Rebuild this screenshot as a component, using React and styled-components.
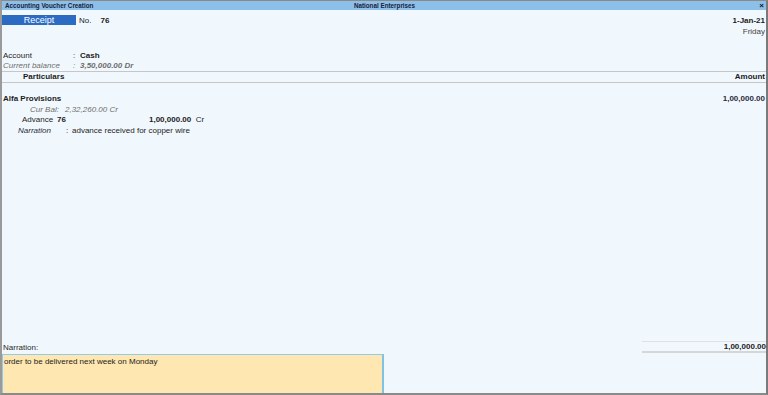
import React from "react";
import styled, { createGlobalStyle } from "styled-components";

const Global = createGlobalStyle`
  html, body { margin: 0; padding: 0; background: #f1f8fd; }
  body { font-family: "Liberation Sans", Arial, sans-serif; }
  * { box-sizing: border-box; }
`;

const Frame = styled.div`
  width: 768px;
  height: 395px;
  display: flex;
  flex-direction: column;
  background: #f1f8fd;
  border-top: 1px solid #8a8a8a;
  border-bottom: 2px solid #8a8a8a;
  border-left: 2px solid #9a9a9a;
  border-right: 2px solid #7a7a7a;
  font-size: 8px;
  color: #1c1c1c;
  overflow: hidden;
`;

const TitleBar = styled.div`
  height: 9px;
  flex: none;
  background: #8dc0e9;
  display: grid;
  grid-template-columns: 1fr auto 1fr;
  align-items: center;
  padding: 0 2px 0 3px;
  font-size: 6.3px;
  font-weight: bold;
  color: #17213d;
  line-height: 9px;
`;

const TitleRight = styled.span`
  justify-self: end;
  font-size: 8px;
  color: #111;
`;

const Head = styled.div`
  display: flex;
  justify-content: space-between;
  padding: 5px 1px 0 0;
  flex: none;
`;

const VoucherType = styled.div`
  display: flex;
  align-items: center;
  height: 10px;
`;

const TypeBox = styled.div`
  width: 74px;
  height: 10px;
  background: #2b6bc2;
  color: #fff;
  font-size: 9px;
  line-height: 10px;
  text-align: center;
`;

const Label = styled.span`
  margin-left: ${(p) => p.$ml || 0}px;
  font-weight: ${(p) => (p.$bold ? "bold" : "normal")};
  color: #1c1c1c;
`;

const DateCol = styled.div`
  display: flex;
  flex-direction: column;
  align-items: flex-end;
  line-height: 11px;
`;

const DateText = styled.span`
  font-weight: ${(p) => (p.$bold ? "bold" : "normal")};
  color: ${(p) => (p.$bold ? "#1c1c1c" : "#444")};
`;

const AccountBlock = styled.div`
  margin-top: 14px;
  padding-left: 1px;
  flex: none;
`;

const InfoRow = styled.div`
  display: grid;
  grid-template-columns: 70px 7px auto;
  height: 10px;
  line-height: 10px;
  color: ${(p) => (p.$muted ? "#6e6e6e" : "#1c1c1c")};
  font-style: ${(p) => (p.$muted ? "italic" : "normal")};
`;

const Value = styled.span`
  font-weight: bold;
`;

const TableHead = styled.div`
  flex: none;
  display: flex;
  justify-content: space-between;
  border-top: 1px solid #c6c6c6;
  border-bottom: 1px solid #c6c6c6;
  height: 12px;
  line-height: 10px;
  font-weight: bold;
  padding: 0 1px 0 21px;
`;

const Body = styled.div`
  flex: 1;
  padding-top: 11px;
`;

const Line = styled.div`
  display: flex;
  align-items: baseline;
  height: 10.7px;
  line-height: 10.7px;
  padding-left: ${(p) => p.$indent || 0}px;
  padding-right: 1px;
  font-style: ${(p) => (p.$italic ? "italic" : "normal")};
  color: ${(p) => (p.$muted ? "#6e6e6e" : "#1c1c1c")};
`;

const Cell = styled.span`
  width: ${(p) => (p.$w ? `${p.$w}px` : "auto")};
  flex: ${(p) => (p.$grow ? 1 : "none")};
  font-weight: ${(p) => (p.$bold ? "bold" : "normal")};
  font-style: ${(p) => (p.$italic ? "italic" : "inherit")};
  color: ${(p) => (p.$dark ? "#2a2a3a" : "inherit")};
`;

const Footer = styled.div`
  flex: none;
  height: 13px;
  display: flex;
  justify-content: space-between;
  align-items: flex-start;
`;

const FooterLabel = styled.span`
  line-height: 13px;
  padding-left: 1px;
  color: #2a2a2a;
`;

const TotalBox = styled.div`
  width: 124px;
  height: 12px;
  border-top: 1px solid #e0e0e0;
  border-bottom: 2px solid #d6d6d6;
  text-align: right;
  font-weight: bold;
  line-height: 9px;
`;

const NarrationBox = styled.div`
  flex: none;
  width: 382px;
  height: 39px;
  background: #fee7b1;
  border: 1px solid #92cbe8;
  border-right: 2px solid #80c2e3;
  border-bottom: none;
  padding: 2px 1px;
  line-height: 9px;
  color: #1c1c1c;
`;

export default function App() {
  return (
    <>
      <Global />
      <Frame>
        <TitleBar>
          <span>Accounting Voucher Creation</span>
          <span>National Enterprises</span>
          <TitleRight>×</TitleRight>
        </TitleBar>
        <Head>
          <VoucherType>
            <TypeBox>Receipt</TypeBox>
            <Label $ml={3}>No.</Label>
            <Label $ml={9} $bold>76</Label>
          </VoucherType>
          <DateCol>
            <DateText $bold>1-Jan-21</DateText>
            <DateText>Friday</DateText>
          </DateCol>
        </Head>
        <AccountBlock>
          <InfoRow>
            <span>Account</span>
            <span>:</span>
            <Value>Cash</Value>
          </InfoRow>
          <InfoRow $muted>
            <span>Current balance</span>
            <span>:</span>
            <Value>3,50,000.00 Dr</Value>
          </InfoRow>
        </AccountBlock>
        <TableHead>
          <span>Particulars</span>
          <span>Amount</span>
        </TableHead>
        <Body>
          <Line $indent={1}>
            <Cell $grow $bold>Alfa Provisions</Cell>
            <Cell $bold $dark>1,00,000.00</Cell>
          </Line>
          <Line $indent={28} $italic $muted>
            <Cell $w={35}>Cur Bal:</Cell>
            <Cell>2,32,260.00 Cr</Cell>
          </Line>
          <Line $indent={20}>
            <Cell $w={35}>Advance</Cell>
            <Cell $w={92} $bold>76</Cell>
            <Cell $bold>1,00,000.00</Cell>
            <Cell>&nbsp; Cr</Cell>
          </Line>
          <Line $indent={16}>
            <Cell $w={48} $italic $dark>Narration</Cell>
            <Cell $w={6}>:</Cell>
            <Cell>advance received for copper wire</Cell>
          </Line>
        </Body>
        <Footer>
          <FooterLabel>Narration:</FooterLabel>
          <TotalBox>1,00,000.00</TotalBox>
        </Footer>
        <NarrationBox>order to be delivered next week on Monday</NarrationBox>
      </Frame>
    </>
  );
}
